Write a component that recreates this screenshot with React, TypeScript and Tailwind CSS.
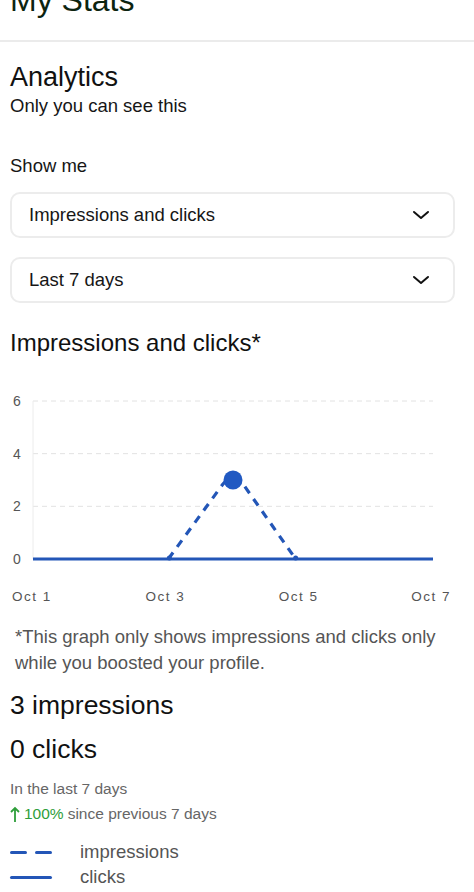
import React from "react";

const font = { fontFamily: "'Liberation Sans', Arial, sans-serif" };

function Chevron() {
  return (
    <svg width="18" height="10" viewBox="0 0 18 10" fill="none">
      <path d="M2 2l7 6 7-6" stroke="#111" strokeWidth="2" strokeLinecap="round" strokeLinejoin="round" />
    </svg>
  );
}

function Select({ label }: { label: string }) {
  return (
    <div className="ml-[10px] mr-[19px] flex h-[46px] items-center justify-between rounded-[10px] border-2 border-[#ececec] pl-[17px] pr-[23px] text-[18.5px] text-[#161616]">
      <span>{label}</span>
      <Chevron />
    </div>
  );
}

function Chart() {
  const left = 33;
  const right = 433;
  const y0 = 172;
  const unit = 158 / 6;
  const step = (right - left) / 6;
  const x = (d: number) => left + step * d;
  const y = (v: number) => y0 - v * unit;
  const ticks = [0, 2, 4, 6];
  const dates = [
    { d: 0, t: "Oct 1", a: "start", dx: -21 },
    { d: 2, t: "Oct 3", a: "middle", dx: -1 },
    { d: 4, t: "Oct 5", a: "middle", dx: -1 },
    { d: 6, t: "Oct 7", a: "end", dx: 18 },
  ];
  return (
    <svg width="474" height="225" viewBox="0 0 474 225" className="block">
      {ticks.map((v) => (
        <g key={v}>
          {v > 0 && (
            <line x1={left} x2={right} y1={y(v)} y2={y(v)} stroke="#e2e2e2" strokeWidth="1" strokeDasharray="5 4" />
          )}
          <text x="17" y={y(v) + 5} textAnchor="middle" fontSize="14" fill="#555" style={font}>
            {v}
          </text>
        </g>
      ))}
      <line x1={left} x2={left} y1={y(6)} y2={y0} stroke="#ececec" strokeWidth="1" />
      <path
        d={`M${x(2) + 2} ${y0} L${x(3) - 10} ${y(3) + 4} Q${x(3)} ${y(3) - 8} ${x(3) + 10} ${y(3) + 4} L${x(4) - 4} ${y0}`}
        fill="none"
        stroke="#2356b7"
        strokeWidth="3.2"
        strokeDasharray="8 7"
      />
      <line x1={left} x2={right} y1={y0} y2={y0} stroke="#2356b7" strokeWidth="3.2" />
      <circle cx={x(2) + 3} cy={y0 - 1} r="2.5" fill="#2356b7" />
      <circle cx={x(4) - 4} cy={y0 - 1} r="2.5" fill="#2356b7" />
      <circle cx={x(3)} cy={y(3)} r="9.5" fill="#2159c2" />
      {dates.map((d) => (
        <text
          key={d.t}
          x={x(d.d) + d.dx}
          y="214"
          textAnchor={d.a as "start" | "middle" | "end"}
          fontSize="13.5"
          letterSpacing="1.5"
          fill="#555"
          style={font}
        >
          {d.t}
        </text>
      ))}
    </svg>
  );
}

export default function App() {
  return (
    <div className="min-h-[892px] w-[474px] overflow-hidden bg-white" style={font}>
      <div className="flex h-[42px] flex-col overflow-hidden border-b-2 border-[#ebebeb] pl-[10px]">
        <div className="-mt-[20px] text-[32px] leading-[40px] text-[#0c2410]">My Stats</div>
      </div>

      <div className="px-[10px] pt-[19px]">
        <h2 className="text-[27px] leading-[32px] text-[#111]">Analytics</h2>
        <p className="mt-[1px] text-[18.5px] leading-[24px] text-[#161616]">Only you can see this</p>
        <p className="mt-[36px] text-[18.5px] leading-[24px] text-[#161616]">Show me</p>
      </div>

      <div className="mt-[14px] flex flex-col gap-[19px]">
        <Select label="Impressions and clicks" />
        <Select label="Last 7 days" />
      </div>

      <h3 className="mt-[25px] px-[10px] text-[24px] leading-[30px] text-[#111]">Impressions and clicks*</h3>

      <div className="mt-[29px]">
        <Chart />
      </div>

      <p className="mt-[12px] pl-[15px] pr-[20px] text-[18.5px] leading-[26px] text-[#555]">
        *This graph only shows impressions and clicks only while you boosted your profile.
      </p>

      <div className="px-[10px]">
        <p className="mt-[13px] text-[26.5px] leading-[32px] text-[#111]">3 impressions</p>
        <p className="mt-[12px] text-[26.5px] leading-[32px] text-[#111]">0 clicks</p>
        <p className="mt-[14px] text-[15.5px] leading-[20px] text-[#666]">In the last 7 days</p>
        <p className="mt-[5px] flex items-center text-[15.5px] leading-[20px] text-[#666]">
          <svg width="10" height="17" viewBox="0 0 10 17" className="mr-[4px]">
            <path d="M5 16V2M1 6l4-4 4 4" fill="none" stroke="#2e9e3a" strokeWidth="1.8" />
          </svg>
          <span className="mr-[4px] text-[#2e9e3a]">100%</span>since previous 7 days
        </p>

        <div className="mt-[18px] flex flex-col gap-[5px]">
          <div className="flex items-center">
            <div className="flex w-[70px] gap-[8px]">
              <span className="h-[3px] w-[17px] rounded-full bg-[#2356b7]" />
              <span className="h-[3px] w-[17px] rounded-full bg-[#2356b7]" />
            </div>
            <span className="text-[18.5px] leading-[20px] text-[#555]">impressions</span>
          </div>
          <div className="flex items-center">
            <div className="w-[70px]">
              <span className="block h-[3px] w-[42px] rounded-full bg-[#2356b7]" />
            </div>
            <span className="text-[18.5px] leading-[20px] text-[#555]">clicks</span>
          </div>
        </div>
      </div>
    </div>
  );
}
